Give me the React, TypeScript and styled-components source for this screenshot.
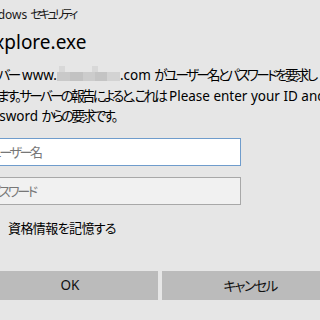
import React from "react";
import styled, { createGlobalStyle } from "styled-components";

const Global = createGlobalStyle`
  html, body {
    margin: 0;
    padding: 0;
    width: 320px;
    height: 320px;
    overflow: hidden;
    background: #e6e6e6;
  }
  body {
    font-family: "Noto Sans", "Noto Sans CJK JP", sans-serif;
    font-feature-settings: "palt";
    color: #000;
  }
`;

const Dialog = styled.div`
  width: 380px;
  margin-left: -20px;
  padding-top: 7px;
  display: flex;
  flex-direction: column;
`;

/* Japanese run: narrower kana like the Windows UI face */
const J = styled.span<{ $ls?: number }>`
  letter-spacing: ${(p) => (p.$ls ?? -2.6)}px;
`;

const Caption = styled.div`
  margin-left: -4px;
  font-size: 12px;
  line-height: 16px;
  color: #1a1a1a;
  white-space: nowrap;
`;

const AppName = styled.div`
  margin-left: -1px;
  margin-top: 6px;
  font-size: 19px;
  line-height: 26px;
  white-space: nowrap;
`;

const Message = styled.div`
  margin-top: 10px;
  margin-left: -3px;
  font-size: 13.5px;
  line-height: 20.5px;
  display: flex;
  flex-direction: column;
`;

const Line = styled.span`
  white-space: nowrap;
`;

const Mosaic = styled.span`
  display: inline-block;
  position: relative;
  width: 63px;
  height: 9px;
  vertical-align: -1px;
  background: linear-gradient(
    90deg,
    #c9c9c9 0 13px,
    #c2c2c2 13px 26px,
    #cccccc 26px 38px,
    #c4c4c4 38px 50px,
    #d3d3d3 50px 63px
  );
  &::before,
  &::after {
    content: "";
    position: absolute;
    top: -6px;
    width: 6px;
    height: 6px;
    background: #d8d8d8;
  }
  &::before { left: 2px; }
  &::after { left: 35px; }
`;

const Field = styled.div<{ $focused?: boolean }>`
  box-sizing: border-box;
  width: 261px;
  height: 28px;
  margin-top: 11px;
  padding: 0 8px;
  display: flex;
  align-items: center;
  font-size: 13px;
  color: #777;
  white-space: nowrap;
  background: ${(p) => (p.$focused ? "#ffffff" : "#f1f1f1")};
  border: 1px solid ${(p) => (p.$focused ? "#6f9ccc" : "#a8a8a8")};
`;

const CheckRow = styled.label`
  margin-top: 13px;
  height: 20px;
  display: flex;
  align-items: center;
  gap: 15px;
  font-size: 13px;
  letter-spacing: -0.6px;
  white-space: nowrap;
`;

const Box = styled.span`
  box-sizing: border-box;
  width: 13px;
  height: 13px;
  border: 1px solid #333;
  background: #fff;
`;

const Buttons = styled.div`
  margin-top: 33px;
  margin-left: 2px;
  display: grid;
  grid-template-columns: 176px 176px;
  gap: 4px;
`;

const Button = styled.button`
  height: 29px;
  border: none;
  padding: 0;
  background: #bbbbbb;
  font-family: "Noto Sans", "Noto Sans CJK JP", sans-serif;
  font-feature-settings: "palt";
  font-size: 13.5px;
  color: #111;
`;

export default function App() {
  return (
    <>
      <Global />
      <Dialog>
        <Caption>
          Windows <J $ls={-2.8}>セキュリティ</J>
        </Caption>
        <AppName>iexplore.exe</AppName>
        <Message>
          <Line>
            <J>サーバー</J> www.<Mosaic />.com <J>がユーザー名とパスワードを要求し</J>
          </Line>
          <Line>
            <J>ています。サーバーの報告によると、これは</J> Please enter your ID and
          </Line>
          <Line>
            Password <J>からの要求です。</J>
          </Line>
        </Message>
        <Field $focused>
          <J $ls={-2.4}>ユーザー名</J>
        </Field>
        <Field>
          <J $ls={-2.4}>パスワード</J>
        </Field>
        <CheckRow>
          <Box />
          資格情報を記憶する
        </CheckRow>
        <Buttons>
          <Button>OK</Button>
          <Button>
            <J $ls={-1.6}>キャンセル</J>
          </Button>
        </Buttons>
      </Dialog>
    </>
  );
}
